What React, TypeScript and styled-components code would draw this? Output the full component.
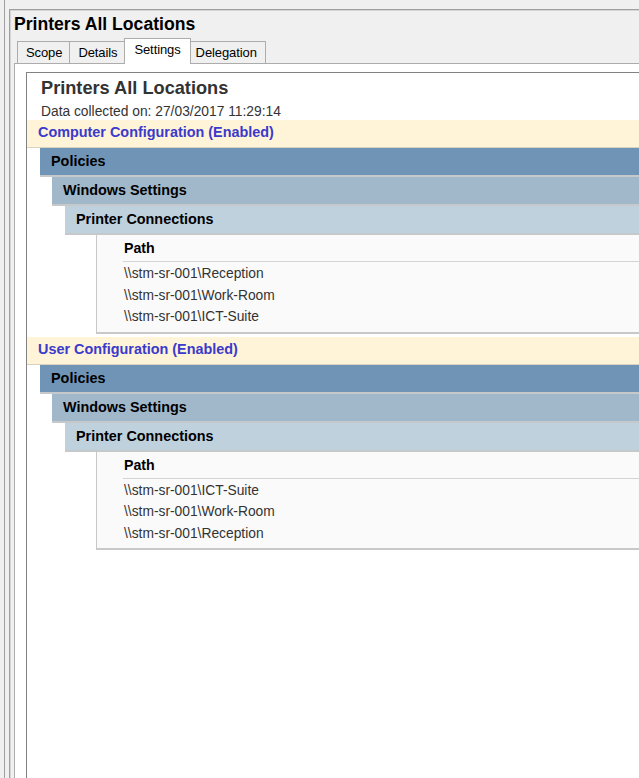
import React from "react";
import styled, { createGlobalStyle } from "styled-components";

const GlobalStyle = createGlobalStyle`
  html, body { margin: 0; padding: 0; }
  body {
    background: #f0f0f0;
    font-family: "Liberation Sans", Arial, sans-serif;
    overflow: hidden;
  }
`;

const Root = styled.div`
  display: flex;
  width: 639px;
  height: 778px;
  overflow: hidden;
`;

const Splitter = styled.div`
  width: 4px;
  flex-shrink: 0;
  border-right: 1px solid #a0a0a0;
`;

const Panel = styled.div`
  flex: 1;
  min-width: 0;
  margin: 9px 0 0 4px;
  border-top: 1px solid #a0a0a0;
  border-left: 1px solid #a0a0a0;
  box-shadow: inset 1px 1px 0 #d4d4d4;
  padding-left: 4px;
  display: flex;
  flex-direction: column;
`;

const WindowTitle = styled.div`
  font-weight: bold;
  font-size: 17.6px;
  line-height: 22px;
  padding-top: 3px;
  color: #000;
  white-space: nowrap;
`;

const TabStrip = styled.div`
  display: flex;
  align-items: flex-end;
  height: 25px;
  margin: 3px 0 0 3px;
  position: relative;
  z-index: 1;
`;

const Tab = styled.div<{ $active?: boolean }>`
  box-sizing: border-box;
  height: ${(p) => (p.$active ? "26px" : "22px")};
  margin: ${(p) => (p.$active ? "0 -2px -1px -2px" : "0")};
  padding: ${(p) => (p.$active ? "3px 9px 0" : "3px 8px 0")};
  background: ${(p) => (p.$active ? "#ffffff" : "#f0f0f0")};
  border: 1px solid #acacac;
  border-bottom: none;
  font-size: 13px;
  line-height: 16px;
  letter-spacing: -0.1px;
  color: #000;
  position: relative;
  z-index: ${(p) => (p.$active ? 2 : 1)};
  & + & { margin-left: ${(p) => (p.$active ? "-2px" : "-1px")}; }
`;

const TabPage = styled.div`
  flex: 1;
  background: #ffffff;
  border-top: 1px solid #acacac;
  border-left: 1px solid #acacac;
  padding: 8px 0 0 11px;
  display: flex;
  flex-direction: column;
`;

const Report = styled.div`
  flex: 1;
  background: #ffffff;
  border-top: 1px solid #828282;
  border-left: 1px solid #828282;
  color: #333;
`;

const ReportTitle = styled.div`
  font-weight: bold;
  font-size: 18.2px;
  line-height: 22px;
  padding: 4px 0 0 14px;
  color: #333;
  white-space: nowrap;
`;

const Collected = styled.div`
  font-size: 13.8px;
  line-height: 17px;
  margin-top: 4px;
  padding-left: 14px;
  color: #333;
  white-space: nowrap;
`;

const Section = styled.div`
  & + & { margin-top: 3px; }
`;

const ConfigBar = styled.div`
  height: 27px;
  line-height: 25px;
  background: #fff3d8;
  border-bottom: 1px solid #d9d2c0;
  padding-left: 11px;
  font-weight: bold;
  font-size: 14.4px;
  color: #3a3acb;
  white-space: nowrap;
`;

const levelColors = ["#7094b5", "#a1b8cb", "#bfd1dd"];
const levelIndent = [13, 25, 38];

const LevelBar = styled.div<{ $level: number }>`
  height: 27px;
  line-height: 27px;
  margin-left: ${(p) => levelIndent[p.$level]}px;
  background: ${(p) => levelColors[p.$level]};
  border-bottom: 2px solid #c6c9cc;
  padding-left: 11px;
  font-weight: bold;
  font-size: 14.4px;
  color: #000;
  white-space: nowrap;
`;

const PathTable = styled.div`
  margin-left: 69px;
  background: #fafafa;
  border-left: 1px solid #c8c8c8;
  border-bottom: 2px solid #c8c8c8;
  padding: 0 0 4px 26px;
`;

const HeaderCell = styled.div`
  height: 26px;
  line-height: 27px;
  border-bottom: 1px solid #d4d4d4;
  padding-left: 1px;
  font-weight: bold;
  font-size: 14.2px;
  color: #000;
`;

const Rows = styled.div`
  padding-top: 1px;
`;

const Row = styled.div`
  height: 21.5px;
  line-height: 21.5px;
  padding-left: 1px;
  font-size: 13.8px;
  color: #333;
  white-space: nowrap;
`;

type Config = { title: string; paths: string[] };

const configs: Config[] = [
  {
    title: "Computer Configuration (Enabled)",
    paths: [
      "\\\\stm-sr-001\\Reception",
      "\\\\stm-sr-001\\Work-Room",
      "\\\\stm-sr-001\\ICT-Suite",
    ],
  },
  {
    title: "User Configuration (Enabled)",
    paths: [
      "\\\\stm-sr-001\\ICT-Suite",
      "\\\\stm-sr-001\\Work-Room",
      "\\\\stm-sr-001\\Reception",
    ],
  },
];

const tabs = ["Scope", "Details", "Settings", "Delegation"];

export default function App() {
  return (
    <>
      <GlobalStyle />
      <Root>
        <Splitter />
        <Panel>
          <WindowTitle>Printers All Locations</WindowTitle>
          <TabStrip>
            {tabs.map((t) => (
              <Tab key={t} $active={t === "Settings"}>
                {t}
              </Tab>
            ))}
          </TabStrip>
          <TabPage>
            <Report>
              <ReportTitle>Printers All Locations</ReportTitle>
              <Collected>Data collected on: 27/03/2017 11:29:14</Collected>
              {configs.map((c) => (
                <Section key={c.title}>
                  <ConfigBar>{c.title}</ConfigBar>
                  <LevelBar $level={0}>Policies</LevelBar>
                  <LevelBar $level={1}>Windows Settings</LevelBar>
                  <LevelBar $level={2}>Printer Connections</LevelBar>
                  <PathTable>
                    <HeaderCell>Path</HeaderCell>
                    <Rows>
                      {c.paths.map((p) => (
                        <Row key={p}>{p}</Row>
                      ))}
                    </Rows>
                  </PathTable>
                </Section>
              ))}
            </Report>
          </TabPage>
        </Panel>
      </Root>
    </>
  );
}
